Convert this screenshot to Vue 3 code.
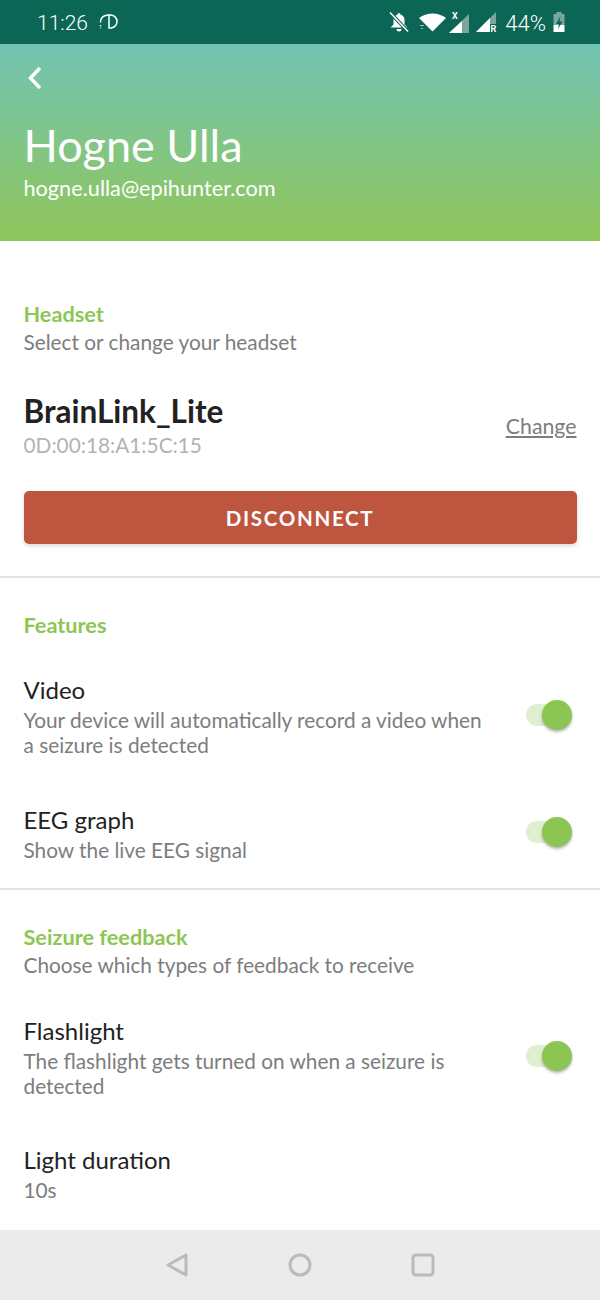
<script setup>
const features = [
  { title: "Video", desc: ["Your device will automatically record a video when", "a seizure is detected"] },
  { title: "EEG graph", desc: ["Show the live EEG signal"] },
];
</script>

<template>
  <div class="screen">
    <div class="statusbar">
      <div class="status-left">
        <span class="clock">11:26</span>
        <svg width="22" height="18" viewBox="0 0 22 18" fill="none" stroke="#fff" stroke-width="1.500">
          <path d="M1.500 9.500C1.500 5 4.500 2 10 2" />
          <path d="M1.500 12v1.200M1.500 14.500v.8" />
          <path d="M10 2v13h1.500a6.500 6.500 0 0 0 0-13z" />
        </svg>
      </div>
      <div class="status-right">
        <svg class="bell" width="20" height="20" viewBox="0 0 20 20">
          <path d="M10 1a1.500 1.500 0 0 1 1.500 1.500c3 .8 4 3.300 4 6v4l3 3H1.500l3-3v-4c0-2.700 1-5.200 4-6A1.500 1.500 0 0 1 10 1zM7.500 17h5a2.500 2.500 0 0 1-5 0z" fill="#fff" />
          <path d="M1 0.500l18 19" stroke="#0b6655" stroke-width="3.500" />
          <path d="M1 0.500l18 19" stroke="#fff" stroke-width="1.500" />
        </svg>
        <svg class="wifi" width="30" height="20" viewBox="0 0 30 20">
          <path d="M1 6C5 3 9.500 1.500 14.500 1.500S24 3 28 6L14.500 19.500z" fill="#fff" />
          <rect x="2" y="13" width="4" height="1" fill="#9dbfb6" />
          <rect x="3" y="16" width="2" height="1" fill="#9dbfb6" />
        </svg>
        <svg class="signal-x" width="22" height="22" viewBox="0 0 22 22">
          <path d="M21 2v19H1z" fill="#78a89b" />
          <path d="M14 9v12H1z" fill="#fff" />
          <text x="4" y="7" class="sig-label">X</text>
        </svg>
        <svg class="signal-r" width="22" height="22" viewBox="0 0 22 22">
          <path d="M21 1v20H1z" fill="#78a89b" />
          <path d="M15 7v14H1z" fill="#fff" />
          <rect x="15" y="13" width="7" height="9" fill="#0b6655" />
          <text x="15.500" y="21" class="sig-label">R</text>
        </svg>
        <span class="battery-text">44%</span>
        <svg class="battery" width="14" height="22" viewBox="0 0 14 22">
          <rect x="4.500" y="1" width="5" height="2" fill="#78a89b" />
          <rect x="1.500" y="3" width="11" height="11" fill="#78a89b" />
          <rect x="1.500" y="14" width="11" height="7" fill="#fff" />
          <path d="M8.500 5L4 13h3l-1 5 4.500-7.500H7.500z" fill="#0b6655" />
        </svg>
      </div>
    </div>

    <header class="hero">
      <svg class="back" width="18" height="26" viewBox="0 0 18 26" fill="none" stroke="#fff" stroke-width="3.500">
        <path d="M14 3L4.500 13 14 23" />
      </svg>
      <h1>Hogne Ulla</h1>
      <p>hogne.ulla@epihunter.com</p>
    </header>

    <main class="content">
      <section class="headset">
        <h2>Headset</h2>
        <p class="muted sub">Select or change your headset</p>
        <div class="device">
          <div>
            <div class="device-name">BrainLink_Lite</div>
            <div class="device-mac">0D:00:18:A1:5C:15</div>
          </div>
          <a class="change">Change</a>
        </div>
        <button class="disconnect">DISCONNECT</button>
      </section>

      <section class="features">
        <h2>Features</h2>
        <div v-for="f in features" :key="f.title" class="row">
          <div class="row-text">
            <div class="row-title">{{ f.title }}</div>
            <div v-for="line in f.desc" :key="line" class="muted">{{ line }}</div>
          </div>
          <span class="toggle"><i></i></span>
        </div>
      </section>

      <section class="feedback">
        <h2>Seizure feedback</h2>
        <p class="muted sub">Choose which types of feedback to receive</p>
        <div class="row flash">
          <div class="row-text">
            <div class="row-title">Flashlight</div>
            <div class="muted">The flashlight gets turned on when a seizure is</div>
            <div class="muted">detected</div>
          </div>
          <span class="toggle"><i></i></span>
        </div>
        <div class="row-title duration">Light duration</div>
        <div class="muted">10s</div>
      </section>
    </main>

    <nav class="navbar">
      <svg width="24" height="26" viewBox="0 0 24 26" fill="none" stroke="#bbb" stroke-width="3" stroke-linejoin="round">
        <path d="M21 3v20L3 13z" />
      </svg>
      <svg width="24" height="24" viewBox="0 0 24 24" fill="none" stroke="#bbb" stroke-width="3">
        <circle cx="12" cy="12" r="10" />
      </svg>
      <svg width="24" height="24" viewBox="0 0 24 24" fill="none" stroke="#bbb" stroke-width="3">
        <rect x="2" y="2" width="20" height="20" rx="3" />
      </svg>
    </nav>
  </div>
</template>

<style>
html, body {
  margin: 0;
  background: #fff;
}
</style>

<style scoped>
.screen {
  width: 600px;
  height: 1300px;
  display: flex;
  flex-direction: column;
  overflow: hidden;
  font-family: Lato, "Open Sans", sans-serif;
  color: #222;
}
.statusbar {
  height: 44px;
  flex: none;
  background: #0b6655;
  color: #fff;
  display: flex;
  align-items: center;
  justify-content: space-between;
  padding: 0 34px 0 37px;
  box-sizing: border-box;
}
.status-left {
  display: flex;
  align-items: center;
  gap: 11px;
}
.clock {
  font-family: Roboto, sans-serif;
  font-size: 21px;
  font-weight: 300;
  margin-top: 2px;
}
.status-right {
  display: flex;
  align-items: center;
}
.wifi {
  margin-left: 9px;
}
.signal-x {
  margin-top: 1px;
}
.signal-r {
  margin-left: 5px;
}
.sig-label {
  font-family: Roboto, sans-serif;
  font-size: 9px;
  font-weight: 700;
  fill: #fff;
}
.battery-text {
  font-family: Roboto, sans-serif;
  font-size: 22px;
  font-weight: 300;
  margin: 2px 0 0 8px;
}
.battery {
  margin-left: 6px;
}
.hero {
  height: 197px;
  flex: none;
  box-sizing: border-box;
  padding: 21px 23.500px 0;
  background: linear-gradient(180deg, #72c4b3 0%, #90c65a 100%);
  color: #fff;
}
.back {
  display: block;
  margin-left: 2px;
}
.hero h1 {
  margin: 26px 0 0;
  font-size: 45px;
  font-weight: 400;
  line-height: 56px;
}
.hero p {
  margin: 2px 0 0;
  font-size: 21.700px;
  line-height: 26px;
}
.content {
  flex: 1;
  min-height: 0;
  overflow: hidden;
}
section {
  padding: 0 23.500px;
}
section + section {
  border-top: 2px solid #e3e3e3;
}
h2 {
  margin: 0;
  font-size: 21.700px;
  font-weight: 700;
  line-height: 26px;
  color: #8cc654;
}
.muted {
  margin: 0;
  font-size: 20.800px;
  line-height: 24.500px;
  color: #7d7d7d;
  white-space: nowrap;
}
.sub {
  margin-top: 3px;
}
.headset {
  padding-top: 60px;
  padding-bottom: 32px;
}
.device {
  display: flex;
  justify-content: space-between;
  align-items: center;
  margin-top: 37.500px;
}
.device-name {
  font-size: 31.500px;
  font-weight: 700;
  line-height: 38px;
  color: #222;
}
.device-mac {
  font-size: 20.800px;
  line-height: 29px;
  color: #b3b3b3;
}
.change {
  font-size: 21.300px;
  color: #7d7d7d;
  text-decoration: underline;
}
.disconnect {
  display: block;
  width: 100%;
  height: 53px;
  margin-top: 32px;
  border: none;
  border-radius: 5px;
  background: #bd553f;
  color: #fff;
  font-family: inherit;
  font-size: 20.500px;
  font-weight: 700;
  letter-spacing: 1.700px;
  box-shadow: 0 2px 4px rgba(0, 0, 0, 0.15);
}
.features {
  padding-top: 34px;
  padding-bottom: 25px;
}
.row {
  display: flex;
  align-items: center;
  justify-content: space-between;
  margin-top: 37px;
}
.features .row + .row {
  margin-top: 48px;
}
.row-title {
  font-size: 24px;
  line-height: 30px;
  margin-bottom: 3px;
  color: #222;
}
.toggle {
  position: relative;
  width: 46px;
  height: 32px;
  flex: none;
  margin: 0 4.500px 3px 0;
}
.toggle::before {
  content: "";
  position: absolute;
  left: 0;
  top: 5px;
  width: 40px;
  height: 22px;
  border-radius: 11px;
  background: #dff0d0;
}
.toggle i {
  position: absolute;
  right: 0;
  top: 1px;
  width: 30px;
  height: 30px;
  border-radius: 50%;
  background: #8bc552;
  box-shadow: 0 2px 3px rgba(0, 0, 0, 0.3);
}
.feedback {
  padding-top: 34px;
}
.flash {
  margin-top: 39px;
}
.duration {
  margin-top: 47px;
}
.navbar {
  height: 70px;
  flex: none;
  background: #ebebeb;
  display: flex;
  align-items: center;
  justify-content: center;
  gap: 99px;
}
</style>
